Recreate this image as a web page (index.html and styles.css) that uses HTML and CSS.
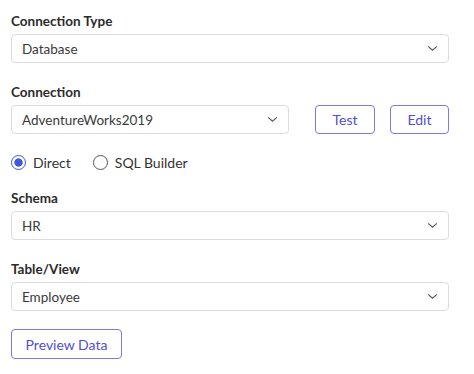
FILE: index.html
```html
<!DOCTYPE html>
<html lang="en">
<head>
    <meta charset="UTF-8">
    <title>Data Source</title>
    <link rel="stylesheet" href="styles.css">
</head>
<body>
    <form class="panel">
        <div class="field">
            <label class="field-label">Connection Type</label>
            <div class="select">
                <span>Database</span>
                <svg class="chevron" viewBox="0 0 12 8"><path d="M1 1.5 L6 6 L11 1.5"/></svg>
            </div>
        </div>

        <div class="field">
            <label class="field-label">Connection</label>
            <div class="row">
                <div class="select grow">
                    <span>AdventureWorks2019</span>
                    <svg class="chevron" viewBox="0 0 12 8"><path d="M1 1.5 L6 6 L11 1.5"/></svg>
                </div>
                <button type="button" class="btn btn-test">Test</button>
                <button type="button" class="btn btn-edit">Edit</button>
            </div>
        </div>

        <div class="radios">
            <label class="radio checked"><span class="dot"></span>Direct</label>
            <label class="radio"><span class="dot"></span>SQL Builder</label>
        </div>

        <div class="field">
            <label class="field-label">Schema</label>
            <div class="select">
                <span>HR</span>
                <svg class="chevron" viewBox="0 0 12 8"><path d="M1 1.5 L6 6 L11 1.5"/></svg>
            </div>
        </div>

        <div class="field">
            <label class="field-label">Table/View</label>
            <div class="select">
                <span>Employee</span>
                <svg class="chevron" viewBox="0 0 12 8"><path d="M1 1.5 L6 6 L11 1.5"/></svg>
            </div>
        </div>

        <button type="button" class="btn btn-preview">Preview Data</button>
    </form>
</body>
</html>
```

FILE: styles.css
```css
* {
    margin: 0;
    padding: 0;
    box-sizing: border-box;
    font-family: 'Lato', 'Noto Sans', sans-serif;
}

body {
    background: #ffffff;
    color: #333;
}

.panel {
    width: 474px;
    padding: 12px 25px 0 11px;
}

.field {
    margin-bottom: 20px;
}

.field-label {
    display: block;
    font-size: 13.5px;
    font-weight: 700;
    color: #2b2b2b;
    line-height: 18px;
    margin-bottom: 4px;
}

.select {
    height: 29px;
    border: 1px solid #dcdcdc;
    border-radius: 4px;
    display: flex;
    align-items: center;
    justify-content: space-between;
    padding: 0 10px 0 10px;
    font-size: 13.5px;
    color: #3a3a3a;
}

.chevron {
    width: 11px;
    height: 7px;
    fill: none;
    stroke: #555;
    stroke-width: 1.3;
}

.row {
    display: flex;
    align-items: center;
}

.grow {
    flex: 1;
}

.btn {
    height: 29px;
    background: #fff;
    border: 1px solid #7b79e6;
    border-radius: 4px;
    color: #4f4fd2;
    font-size: 14px;
    cursor: pointer;
}

.btn-test {
    width: 60px;
    margin-left: 26px;
}

.btn-edit {
    width: 59px;
    margin-left: 15px;
}

.radios {
    display: flex;
    gap: 22px;
    margin: 1px 0 18px 0;
}

.radio {
    display: flex;
    align-items: center;
    font-size: 14px;
    color: #333;
}

.dot {
    width: 15px;
    height: 15px;
    border: 1px solid #555;
    border-radius: 50%;
    margin-right: 7px;
    display: inline-block;
}

.radio.checked .dot {
    border-color: #3e58e0;
    background: radial-gradient(circle, #3e58e0 0 3.8px, #fff 4.5px);
}

.btn-preview {
    width: 111px;
    height: 30px;
    margin-top: -2px;
}
```
